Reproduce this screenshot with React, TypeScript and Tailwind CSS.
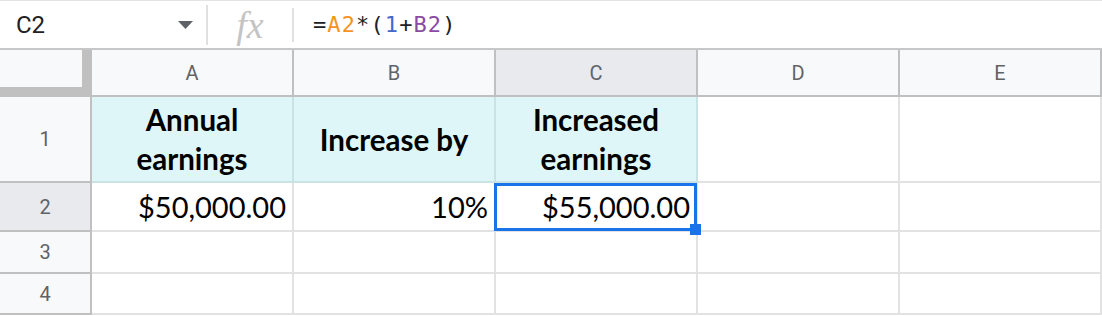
const cols = ["A", "B", "C", "D", "E"];

const rows = [
  { n: "1", h: "h-[86px]", cells: ["Annual earnings", "Increase by", "Increased earnings", "", ""] },
  { n: "2", h: "h-[49px]", cells: ["$50,000.00", "10%", "$55,000.00", "", ""] },
  { n: "3", h: "h-[42px]", cells: ["", "", "", "", ""] },
  { n: "4", h: "h-[41px]", cells: ["", "", "", "", ""] },
];

function FormulaBar() {
  return (
    <div className="flex h-[50px] items-center border-t border-b-2 border-t-[#e3e3e3] border-b-[#c7c7c7] bg-white">
      <div className="flex w-[206px] items-center justify-between pl-4 pr-[13px]">
        <span className="font-['Roboto'] text-[24px] text-[#202124]">C2</span>
        <svg width="15" height="8" viewBox="0 0 15 8">
          <path d="M0 0h15L7.5 8z" fill="#5f6368" />
        </svg>
      </div>
      <div className="h-[40px] w-[2px] bg-[#e0e0e0]" />
      <div className="flex w-[84px] items-center justify-center">
        <span className="font-['Liberation_Serif'] text-[38px] italic leading-none text-[#c4c4c4]">fx</span>
      </div>
      <div className="h-[34px] w-[2px] bg-[#e0e0e0]" />
      <div className="pl-[19px] font-['DejaVu_Sans_Mono'] text-[22px] tracking-[1.1px] text-[#202124]">
        =<span className="text-[#f7931e]">A2</span>*(<span className="text-[#3f69d0]">1</span>+
        <span className="text-[#8a4aa5]">B2</span>)
      </div>
    </div>
  );
}

export default function App() {
  return (
    <div className="h-[316px] w-[1102px] overflow-hidden bg-white">
      <FormulaBar />
      <div className="grid grid-cols-[92px_repeat(5,202px)]">
        {/* corner */}
        <div className="h-[47px] border-r-2 border-b-2 border-[#c0c0c0] bg-[#f8f9fa]">
          <div className="h-full w-full border-r-[8px] border-b-[8px] border-[#c0c0c0] bg-[#f8f9fa]" />
        </div>
        {cols.map((c) => (
          <div
            key={c}
            className={`flex h-[47px] items-center justify-center border-r-2 border-b-2 border-[#c0c0c0] font-['Roboto'] text-[20px] text-[#5f6368] ${
              c === "C" ? "bg-[#e8eaed]" : "bg-[#f8f9fa]"
            }`}
          >
            {c}
          </div>
        ))}

        {rows.map((r) => (
          <Row key={r.n} {...r} />
        ))}
      </div>
    </div>
  );
}

function Row({ n, h, cells }: { n: string; h: string; cells: string[] }) {
  return (
    <>
      <div
        className={`flex ${h} items-center justify-center border-r-2 border-b-2 border-[#c0c0c0] font-['Roboto'] text-[20px] text-[#5f6368] ${
          n === "2" ? "bg-[#e8eaed]" : "bg-[#f8f9fa]"
        }`}
      >
        {n}
      </div>
      {cells.map((v, i) => {
        const head = n === "1" && i < 3;
        const selected = n === "2" && i === 2;
        return (
          <div
            key={i}
            className={`relative flex ${h} items-center border-r-2 border-b-2 font-['Lato'] text-black ${
              head
                ? "justify-center border-[#c9e2e5] bg-[#dff6f8] text-center text-[29.5px] font-bold leading-[39px]"
                : "justify-end border-[#e2e2e2] bg-white pr-[6px] text-[29px]"
            }`}
          >
            {head ? <span className="block w-[180px]">{v}</span> : v}
            {selected && (
              <>
                <div className="absolute top-0 right-[-1px] bottom-[-1px] left-[-2px] z-10 border-[3px] border-[#1a73e8]" />
                <div className="absolute right-[-5px] bottom-[-5px] z-10 h-[11px] w-[11px] bg-[#1a73e8]" />
              </>
            )}
          </div>
        );
      })}
    </>
  );
}
